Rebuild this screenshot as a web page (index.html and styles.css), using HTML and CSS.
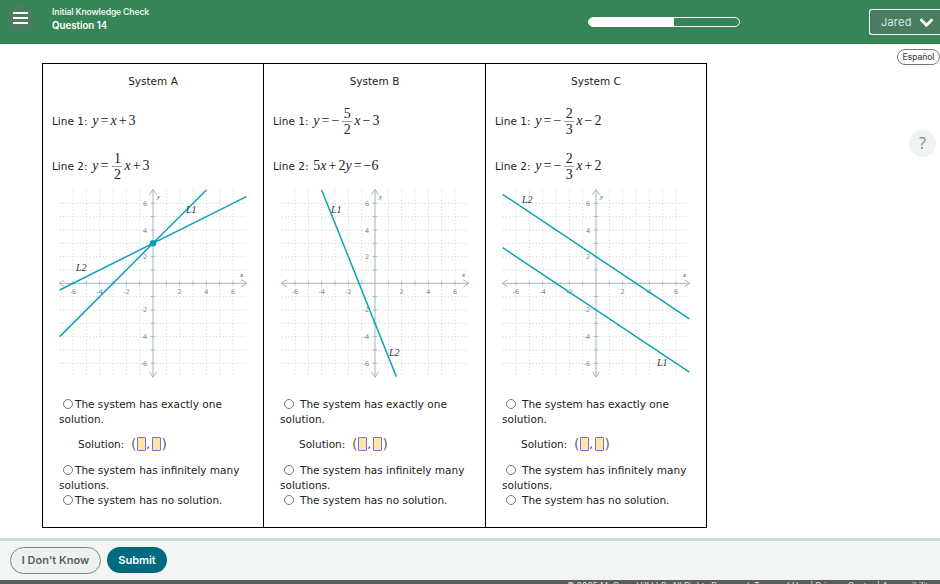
FILE: index.html
```html
<!DOCTYPE html>
<html lang="en">
<head>
<meta charset="utf-8">
<title>Initial Knowledge Check</title>
<link rel="stylesheet" href="styles.css">
</head>
<body>
<svg class="defs" xmlns="http://www.w3.org/2000/svg">
  <symbol id="plane" viewBox="-100 -94.3 200 190" overflow="visible">
    <path class="grid" d="M-93.33 -80H93.33M-93.33 -66.67H93.33M-93.33 -53.33H93.33M-93.33 -40H93.33M-93.33 -26.67H93.33M-93.33 -13.33H93.33M-93.33 13.33H93.33M-93.33 26.67H93.33M-93.33 40H93.33M-93.33 53.33H93.33M-93.33 66.67H93.33M-93.33 80H93.33M-80 -93.33V93.33M-66.67 -93.33V93.33M-53.33 -93.33V93.33M-40 -93.33V93.33M-26.67 -93.33V93.33M-13.33 -93.33V93.33M13.33 -93.33V93.33M26.67 -93.33V93.33M40 -93.33V93.33M53.33 -93.33V93.33M66.67 -93.33V93.33M80 -93.33V93.33"/>
    <path class="axis" d="M-93.33 0H93.33M0 -93.33V93.33M-88.5 -3.5L-94 0L-88.5 3.5M88.5 -3.5L94 0L88.5 3.5M-3.5 -88.5L0 -94L3.5 -88.5M-3.5 88.5L0 94L3.5 88.5"/>
    <path class="tick" d="M-80 -2V2M-66.67 -2V2M-53.33 -2V2M-40 -2V2M-26.67 -2V2M-13.33 -2V2M13.33 -2V2M26.67 -2V2M40 -2V2M53.33 -2V2M66.67 -2V2M80 -2V2M-2 -80H2M-2 -66.67H2M-2 -53.33H2M-2 -40H2M-2 -26.67H2M-2 -13.33H2M-2 13.33H2M-2 26.67H2M-2 40H2M-2 53.33H2M-2 66.67H2M-2 80H2"/>
    <g class="num">
      <text x="-80" y="11">-6</text><text x="-53.33" y="11">-4</text><text x="-26.67" y="11">-2</text>
      <text x="26.67" y="11">2</text><text x="53.33" y="11">4</text><text x="80" y="11">6</text>
      <text x="-8" y="-77">6</text><text x="-8" y="-50.5">4</text><text x="-8" y="-24">2</text>
      <text x="-9" y="29">-2</text><text x="-9" y="56">-4</text><text x="-9" y="83">-6</text>
    </g>
    <text class="axis-name" x="87" y="-6">x</text>
    <text class="axis-name" x="4" y="-84">y</text>
  </symbol>
</svg>

<header class="topbar">
  <div class="topbar-left">
    <button class="menu" type="button" aria-label="Menu"><span></span><span></span><span></span></button>
    <div class="titles">
      <div class="title-main">Initial Knowledge Check</div>
      <div class="title-sub">Question 14</div>
    </div>
  </div>
  <div class="progress"><div class="progress-fill"></div></div>
  <button class="user" type="button">Jared
    <svg class="chev" viewBox="0 0 14 10"><path d="M1.5 2L7 7.5L12.5 2"/></svg>
  </button>
</header>

<main class="content">
  <div class="lang-row"><button class="lang" type="button">Español</button></div>
  <div class="stage">
    <div class="systems">

      <section class="cell">
        <h2 class="sys-title">System A</h2>
        <div class="eq eq1">Line 1:&nbsp;<span class="m"><i>y</i><b>=</b><i>x</i><b>+</b>3</span></div>
        <div class="eq eq2">Line 2:&nbsp;<span class="m"><i>y</i><b>=</b><span class="frac"><span>1</span><span>2</span></span><i>x</i><b>+</b>3</span></div>
        <svg class="graph" viewBox="-100 -94.3 200 190">
          <use href="#plane" x="-100" y="-94.3" width="200" height="190"/>
          <path class="plot" d="M-93.33 53.33L53.33 -93.33M-93.33 6.67L93.33 -86.67"/>
          <circle class="pt" cx="0" cy="-40" r="3.2"/>
          <text class="lab" x="33" y="-70">L1</text>
          <text class="lab" x="-77" y="-12">L2</text>
        </svg>
        <div class="opts">
          <label class="opt first"><input type="radio" name="a">The system has exactly one solution.</label>
          <div class="sol">Solution:&nbsp; <span class="paren">(</span><span class="box"></span><span class="comma">,</span><span class="box"></span><span class="paren">)</span></div>
          <label class="opt first"><input type="radio" name="a">The system has infinitely many solutions.</label>
          <label class="opt first"><input type="radio" name="a">The system has no solution.</label>
        </div>
      </section>

      <section class="cell">
        <h2 class="sys-title">System B</h2>
        <div class="eq eq1">Line 1:&nbsp;<span class="m"><i>y</i><b>=</b><b class="neg">−</b><span class="frac"><span>5</span><span>2</span></span><i>x</i><b>−</b>3</span></div>
        <div class="eq eq2">Line 2:&nbsp;<span class="m">5<i>x</i><b>+</b>2<i>y</i><b>=</b>−6</span></div>
        <svg class="graph" viewBox="-100 -94.3 200 190">
          <use href="#plane" x="-100" y="-94.3" width="200" height="190"/>
          <path class="plot" d="M-53.33 -93.33L21.33 93.33"/>
          <text class="lab" x="-44" y="-70">L1</text>
          <text class="lab" x="14" y="73">L2</text>
        </svg>
        <div class="opts">
          <label class="opt"><input type="radio" name="b">The system has exactly one solution.</label>
          <div class="sol">Solution:&nbsp; <span class="paren">(</span><span class="box"></span><span class="comma">,</span><span class="box"></span><span class="paren">)</span></div>
          <label class="opt"><input type="radio" name="b">The system has infinitely many solutions.</label>
          <label class="opt"><input type="radio" name="b">The system has no solution.</label>
        </div>
      </section>

      <section class="cell">
        <h2 class="sys-title">System C</h2>
        <div class="eq eq1">Line 1:&nbsp;<span class="m"><i>y</i><b>=</b><b class="neg">−</b><span class="frac"><span>2</span><span>3</span></span><i>x</i><b>−</b>2</span></div>
        <div class="eq eq2">Line 2:&nbsp;<span class="m"><i>y</i><b>=</b><b class="neg">−</b><span class="frac"><span>2</span><span>3</span></span><i>x</i><b>+</b>2</span></div>
        <svg class="graph" viewBox="-100 -94.3 200 190">
          <use href="#plane" x="-100" y="-94.3" width="200" height="190"/>
          <path class="plot" d="M-93.33 -35.56L93.33 88.89M-93.33 -88.89L93.33 35.56"/>
          <text class="lab" x="-74" y="-80">L2</text>
          <text class="lab" x="61" y="83">L1</text>
        </svg>
        <div class="opts">
          <label class="opt"><input type="radio" name="c">The system has exactly one solution.</label>
          <div class="sol">Solution:&nbsp; <span class="paren">(</span><span class="box"></span><span class="comma">,</span><span class="box"></span><span class="paren">)</span></div>
          <label class="opt"><input type="radio" name="c">The system has infinitely many solutions.</label>
          <label class="opt"><input type="radio" name="c">The system has no solution.</label>
        </div>
      </section>

    </div>
    <button class="help" type="button">?</button>
  </div>
</main>

<footer class="actions">
  <button class="btn btn-ghost" type="button">I Don't Know</button>
  <button class="btn btn-primary" type="button">Submit</button>
</footer>
<div class="legal">© 2025 McGraw Hill LLC. All Rights Reserved. Terms of Use | Privacy Center | Accessibility</div>
</body>
</html>
```
FILE: styles.css
```css
* { box-sizing: border-box; }
html, body { margin: 0; padding: 0; }
body {
  width: 940px;
  height: 584px;
  overflow: hidden;
  background: #fff;
  display: flex;
  flex-direction: column;
  font-family: "DejaVu Sans", Verdana, sans-serif;
  color: #222;
}
button { font-family: inherit; padding: 0; cursor: pointer; }
.defs { display: none; }

.topbar {
  flex: none;
  height: 44px;
  background: #378556;
  display: flex;
  align-items: center;
  color: #fff;
}
.topbar-left { width: 588px; display: flex; align-items: center; }
.menu {
  width: 27px;
  height: 27px;
  margin: -8px 0 0 7px;
  border: 0;
  border-radius: 50%;
  background: #4a7d60;
  display: flex;
  flex-direction: column;
  align-items: center;
  justify-content: center;
  gap: 3.8px;
}
.menu span { width: 15px; height: 1.2px; background: #fff; }
.titles { margin: -6px 0 0 18px; font-family: "Inter", sans-serif; font-weight: 600; }
.title-main { font-size: 8.6px; line-height: 13px; letter-spacing: -.13px; color: #e9f3ed; }
.title-sub { font-size: 9.7px; line-height: 13px; }
.progress {
  width: 152px;
  height: 10px;
  border: 1px solid #fff;
  border-radius: 5px;
  overflow: hidden;
}
.progress-fill { width: 85px; height: 100%; background: #fff; }
.user {
  width: 71px;
  height: 26px;
  margin-left: auto;
  border: 1px solid #fff;
  border-right: 0;
  border-radius: 3px 0 0 3px;
  background: #4a7d60;
  color: #cfeae6;
  font-family: "Inter", sans-serif;
  font-size: 11px;
  letter-spacing: .2px;
  display: flex;
  align-items: center;
  gap: 7px;
  padding-left: 11px;
}
.chev { width: 15px; height: 11px; }
.chev path { fill: none; stroke: #fff; stroke-width: 2.6; }

.content { flex: 1; min-height: 0; display: flex; flex-direction: column; }
.lang-row { height: 19px; display: flex; justify-content: flex-end; align-items: flex-start; padding-top: 5px; }
.lang {
  width: 43px;
  height: 16px;
  border: 1px solid #777;
  border-radius: 8px;
  background: #fff;
  color: #444;
  font-family: "Inter", sans-serif;
  font-weight: 500;
  font-size: 8.4px;
  line-height: 13px;
}
.stage { display: flex; padding-left: 42px; }
.systems {
  width: 665px;
  height: 465px;
  border: 1px solid #000;
  display: grid;
  grid-template-columns: 220px 222px 221px;
}
.cell { border-left: 1px solid #000; display: flex; flex-direction: column; min-width: 0; }
.cell:first-child { border-left: 0; }
.sys-title {
  margin: 0;
  height: 35px;
  font-size: 10.5px;
  font-weight: 400;
  line-height: 35px;
  text-align: center;
}
.eq {
  padding-left: 9px;
  font-size: 10.5px;
  display: flex;
  align-items: center;
}
.eq1 { height: 44px; }
.eq2 { height: 46px; }
.m {
  margin-left: 1.5px;
  font-family: "Liberation Serif", serif;
  font-size: 14px;
  display: inline-flex;
  align-items: center;
}
.m i { font-style: italic; }
.m b { font-weight: 400; margin: 0 2px; }
.m b.neg { margin-left: 0; margin-right: 1px; }
.frac {
  display: inline-flex;
  flex-direction: column;
  align-items: center;
  line-height: 15px;
  margin: 0 2px;
}
.frac span { width: 10px; text-align: center; }
.frac span + span { border-top: 1px solid #999; }
.graph { width: 200px; height: 190px; margin: 0 auto; flex: none; display: block; }
.grid { fill: none; stroke: #c6d3d6; stroke-width: 1; stroke-dasharray: 1 2.33; }
.axis { fill: none; stroke: #a3b7bd; stroke-width: 1; }
.tick { fill: none; stroke: #a3b7bd; stroke-width: 1; }
.num { font-family: "DejaVu Sans", sans-serif; font-size: 6.5px; fill: #7d8b8f; text-anchor: middle; }
.axis-name { font-family: "Liberation Serif", serif; font-style: italic; font-size: 7px; fill: #444; }
.plot { fill: none; stroke: #0ea2b8; stroke-width: 1.5; }
.pt { fill: #0b9db3; }
.lab { font-family: "Liberation Serif", serif; font-style: italic; font-size: 10px; fill: #333; }

.opts { padding: 18px 16px 0; font-size: 10.5px; line-height: 15px; }
.opt { display: block; }
.opt input {
  appearance: none;
  width: 10px;
  height: 10px;
  margin: 0 6px 0 4px;
  border: 1px solid #777;
  border-radius: 50%;
  vertical-align: -1px;
  background: #fff;
}
.opt.first input { margin-right: 2px; }
.sol { display: flex; align-items: center; height: 26px; margin: 4px 0 6px 19px; white-space: pre; }
.paren { font-size: 14px; color: #666; line-height: 15px; }
.box {
  width: 9px;
  height: 14px;
  margin: 0 .5px;
  background: #ffe6a5;
  border: 1px solid #6f6ff0;
  border-radius: 1px;
}
.comma { width: 5px; }

.help {
  width: 27px;
  height: 27px;
  margin: 67px 0 0 202px;
  flex: none;
  border: 0;
  border-radius: 50%;
  background: #eff3f4;
  color: #6f8c96;
  font-family: "Open Sans", sans-serif;
  font-size: 16px;
  line-height: 27px;
}

.actions {
  flex: none;
  height: 42px;
  background: #f3f5f4;
  border-top: 3px solid #d0dadb;
  display: flex;
  align-items: center;
  gap: 6px;
  padding: 0 0 1px 10px;
}
.btn {
  font-family: "Inter", sans-serif;
  font-size: 11px;
  font-weight: 600;
  border-radius: 14px;
}
.btn-ghost { width: 91px; height: 27px; background: #eef1f2; border: 1px solid #7c8486; color: #5a6163; }
.btn-primary { width: 60px; height: 26px; background: #006b80; border: 0; color: #fff; }
.legal {
  flex: none;
  height: 4px;
  overflow: hidden;
  background: #555f5e;
  color: #dfe5e5;
  font-family: "Inter", sans-serif;
  font-size: 8.5px;
  line-height: 9px;
  text-align: right;
  padding: 2px 7px 0 0;
  white-space: nowrap;
}
```
